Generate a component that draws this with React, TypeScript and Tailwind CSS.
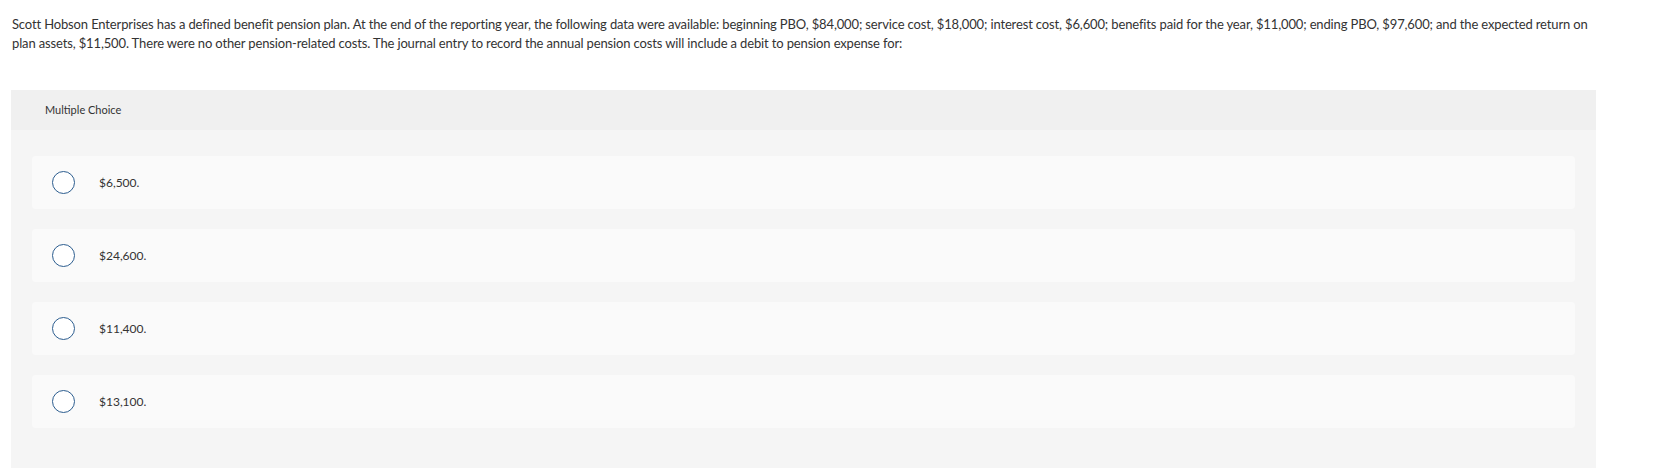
import React from 'react'

const choices = ['$6,500.', '$24,600.', '$11,400.', '$13,100.']

function Radio() {
  return (
    <span className="w-[23px] h-[23px] rounded-full border-[1.5px] border-[#2c5d8f] bg-white flex-shrink-0" />
  )
}

export default function App() {
  return (
    <div className="w-[1662px] h-[468px] overflow-hidden bg-white text-[#333]" style={{ fontFamily: 'Lato, "Liberation Sans", sans-serif' }}>
      <p className="pl-[12px] pr-[66px] pt-[15px] text-[13px] leading-[19px] tracking-[-0.14px]">
        Scott Hobson Enterprises has a defined benefit pension plan. At the end of the reporting year, the following data were available: beginning PBO, $84,000; service cost, $18,000; interest cost, $6,600; benefits paid for the year, $11,000; ending PBO, $97,600; and the expected return on plan assets, $11,500. There were no other pension-related costs. The journal entry to record the annual pension costs will include a debit to pension expense for:
      </p>

      <div className="ml-[11px] mt-[37px] w-[1585px] bg-[#f5f5f5] pb-[40px]">
        <div className="h-[40px] bg-[#f0f0f0] flex items-center pl-[34px] text-[11px]">
          Multiple Choice
        </div>
        <div className="flex flex-col gap-[20px] px-[21px] pt-[26px]">
          {choices.map(c => (
            <div key={c} className="h-[53px] bg-[#fafafa] rounded-[4px] flex items-center pl-[20px]">
              <Radio />
              <span className="ml-[24px] text-[12px]">{c}</span>
            </div>
          ))}
        </div>
      </div>
    </div>
  )
}
